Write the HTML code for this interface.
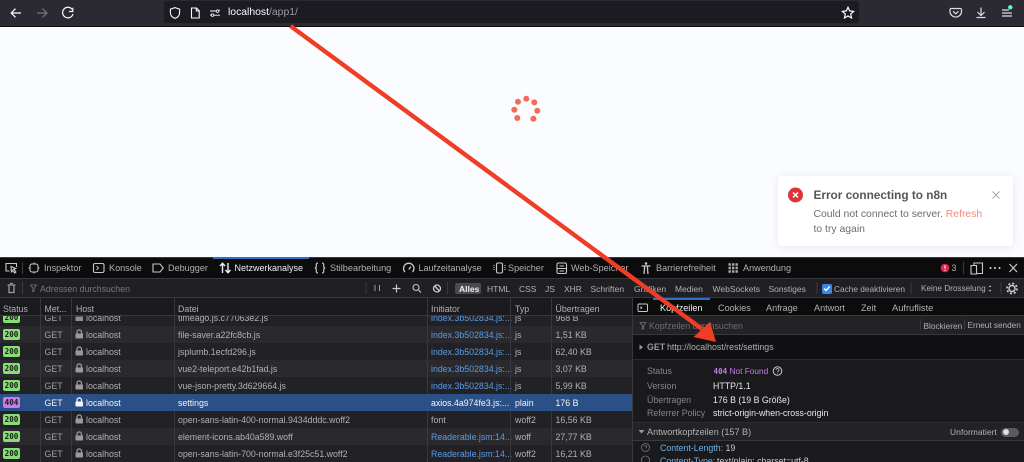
<!DOCTYPE html>
<html><head><meta charset="utf-8">
<style>
*{box-sizing:border-box}
html,body{margin:0;padding:0;width:1024px;height:462px;overflow:hidden;background:#fff}
body{font-family:"Liberation Sans",sans-serif;position:relative}
#w{position:absolute;left:0;top:0;width:1024px;height:462px;overflow:hidden;filter:blur(.35px)}
.a{position:absolute;white-space:nowrap}
.t{position:absolute;white-space:nowrap;font-size:8.8px;line-height:12px;color:#b1b1b3}
.tb{font-size:9.1px}
.fb{font-size:8.5px}
.r{position:absolute;left:0;width:632px;height:17px}
.r .t{top:2.5px}
.r .g{color:#a0a0a4}
.b{position:absolute;left:3px;top:3px;width:17px;height:11px;border-radius:2px;background:#86de74;color:#1a1a1c;font:bold 7.6px/11px "DejaVu Sans Mono","Liberation Mono",monospace;text-align:center}
.l{color:#5b9be6}
.s{position:absolute;top:298px;width:1px;height:164px;background:#38383d}
svg{position:absolute;overflow:visible}
</style></head><body><div id="w">
<!-- browser toolbar -->
<div class="a" style="left:0;top:0;width:1024px;height:27px;background:#2b2a33;border-bottom:1px solid #0c0c0d"></div>
<div class="a" style="left:164px;top:1px;width:695px;height:22px;background:#1c1b22;border-radius:3px"></div>
<svg style="left:0;top:0" width="1024" height="27" fill="none" stroke="#fbfbfe" stroke-width="1.2">
<path d="M21 13H11.500M15.500 8.700L11.200 13l4.300 4.300"/>
<path d="M37 13H47M42.500 8.700L47 13l-4.500 4.300" stroke="#77767c"/>
<path d="M72 9.200A5.300 5.300 0 1 0 73 14M72.800 7.800v3.700h-3.700"/>
<path d="M175 7.600l4.600 1.500v3.400c0 3-2 5-4.600 5.800-2.600-.8-4.600-2.800-4.600-5.800V9.100z" stroke-width="1.100"/>
<path d="M191.500 8h5l2.700 2.700v7.300h-7.700zM196.300 8v3h3" stroke-width="1.100"/>
<path d="M210 11h6M219 10.200h1M210 15h1M214 15.200h6M217.500 9.800a1.300 1.300 0 1 0 .01 0M212.500 13.800a1.300 1.300 0 1 0 .01 0" stroke-width=".9"/>
<path d="M848 7.300l1.700 3.600 3.900.5-2.900 2.700.8 3.900-3.500-2-3.500 2 .8-3.900-2.900-2.700 3.900-.5z"/>
<path d="M951 8.500h9.500a1.200 1.200 0 0 1 1 1v2.500a5.800 5.800 0 0 1-11.500 0V9.500a1.200 1.200 0 0 1 1-1zM953 11.300l2.700 2.500 2.700-2.500" stroke="#dcdce0"/>
<path d="M981 7.500v7.500M977.500 12l3.500 3.500 3.500-3.500M976.500 17.500h9" stroke="#dcdce0"/>
<path d="M1002 10h7M1002 13h10M1002 16h10" stroke="#dcdce0"/>
<circle cx="1010.300" cy="7.300" r="2.200" fill="#54ffbd" stroke="none"/>
</svg>
<div class="a" style="left:228px;top:6px;font-size:10.400px;line-height:13px;color:#fbfbfe">localhost<span style="color:#9a9aa0">/app1/</span></div>
<!-- page -->
<div class="a" style="left:0;top:27px;width:1024px;height:230px;background:#fbfcff"></div>
<svg style="left:0;top:0" width="1024" height="257" fill="#f26c57">
<circle cx="526.300" cy="98.700" r="3"/><circle cx="534.300" cy="102.400" r="3"/><circle cx="537.300" cy="110.700" r="3"/><circle cx="533.400" cy="118.700" r="3"/><circle cx="517.300" cy="118" r="3"/><circle cx="514.300" cy="109.700" r="3"/><circle cx="518" cy="101.700" r="3"/>
</svg>
<!-- toast -->
<div class="a" style="left:778px;top:176px;width:235px;height:70px;background:#fff;border-radius:3px;box-shadow:0 1px 8px rgba(90,100,130,.14)"></div>
<svg style="left:0;top:0" width="1024" height="257" fill="none">
<circle cx="795.500" cy="195" r="7.500" fill="#dd3535"/>
<path d="M793 192.500l5 5M798 192.500l-5 5" stroke="#fff" stroke-width="1.500"/>
<path d="M992.500 191.500l7 7M999.500 191.500l-7 7" stroke="#a8a8ab" stroke-width="1"/>
</svg>
<div class="a" style="left:813.500px;top:187px;font-size:11.800px;line-height:16px;font-weight:bold;color:#55555b">Error connecting to n8n</div>
<div class="a" style="left:813.500px;top:207px;font-size:10.400px;line-height:15px;color:#6c6c72">Could not connect to server. <span style="color:#f2897a">Refresh</span></div>
<div class="a" style="left:813.500px;top:222px;font-size:10.400px;line-height:15px;color:#6c6c72">to try again</div>
<!-- devtools -->
<div class="a" style="left:0;top:257px;width:1024px;height:205px;background:#202024"></div>
<div class="a" style="left:0;top:257px;width:1024px;height:22px;background:#0c0c0d;border-top:1px solid #3a3a40;border-bottom:1px solid #38383d"></div>
<div class="a" style="left:213px;top:257px;width:96px;height:2px;background:#2f6fc4"></div>
<div class="t tb" style="left:44px;top:262px">Inspektor</div>
<div class="t tb" style="left:109px;top:262px">Konsole</div>
<div class="t tb" style="left:168px;top:262px">Debugger</div>
<div class="t" style="left:234.500px;top:262px;color:#f0f0f4;font-size:9px">Netzwerkanalyse</div>
<div class="t" style="left:330px;top:262px;font-size:9.200px">Stilbearbeitung</div>
<div class="t tb" style="left:418.500px;top:262px">Laufzeitanalyse</div>
<div class="t tb" style="left:508px;top:262px">Speicher</div>
<div class="t tb" style="left:571px;top:262px">Web-Speicher</div>
<div class="t tb" style="left:656px;top:262px">Barrierefreiheit</div>
<div class="t tb" style="left:743px;top:262px">Anwendung</div>
<div class="t" style="left:951.500px;top:262px">3</div>
<svg style="left:0;top:0" width="1024" height="300" fill="none" stroke="#c8c8ca" stroke-width="1.100">
<path d="M9.500 271H6v-7.500h10.500V267M11 266.500l4.700 2.100-2 .7 2.200 2.800-1.200 1-2.100-2.800-1.200 1.500z" fill="#0c0c0d"/>
<path d="M22.500 262v12" stroke="#38383d"/>
<rect x="30" y="264" width="8" height="8" rx="2"/><path d="M34 262.500v1.500M34 272v1.500M28.500 268H30M38 268h1.500"/>
<rect x="93.500" y="263.500" width="10.500" height="9" rx="1.500"/><path d="M96.500 266l2 2-2 2" stroke-width=".9"/>
<path d="M153 264h7l3.300 4-3.300 4h-7z"/>
<path d="M222.500 273v-9.500M220 266l2.500-2.700 2.500 2.700M228 263v9.500M225.500 270l2.500 2.700 2.500-2.700" stroke="#f0f0f4" stroke-width="1.400"/>
<path d="M318 263c-2.500 0-1.500 2.800-1.800 4-.2.800-1.200 1-1.200 1s1 .2 1.200 1c.3 1.200-.7 4 1.800 4M322 263c2.500 0 1.500 2.800 1.800 4 .2.800 1.200 1 1.200 1s-1 .2-1.200 1c-.3 1.200.7 4-1.800 4" stroke-width="1.200"/>
<path d="M405 272a5.200 5.200 0 1 1 7.500 0M408.800 269.500l2-3" stroke-width="1.300"/>
<rect x="496.500" y="263" width="6" height="10" rx="1.500"/><path d="M494 265v6M505 265v6" stroke-dasharray="1 1"/>
<rect x="557" y="263" width="9.500" height="10.500" rx="1.500"/><path d="M559.500 266h4.500M557 268.500h9.500M559.500 271h4.500"/>
<circle cx="646" cy="263.500" r="1.300" fill="#c8c8ca" stroke="none"/><path d="M641.500 266h9M644.500 266v3l-.5 5M647.500 266v3l.5 5" stroke-width="1.300"/>
<path d="M728.500 264.500h2.400M732 264.500h2.400M735.500 264.500h2.400M728.500 268h2.400M732 268h2.400M735.500 268h2.400M728.500 271.500h2.400M732 271.500h2.400M735.500 271.500h2.400" stroke="#a8a8ac" stroke-width="2.400"/>
<circle cx="945" cy="268" r="4.300" fill="#e22850" stroke="none"/><path d="M945 265.500v3M945 269.700v1" stroke="#fff" stroke-width="1.200"/>
<path d="M963.500 262v12" stroke="#38383d"/>
<path d="M974 265.500v-2.500h8.500v10.500H977M971 265.500h5.500v8.500H971z"/>
<circle cx="990.500" cy="268" r="1" fill="#dcdce0" stroke="none"/><circle cx="995" cy="268" r="1" fill="#dcdce0" stroke="none"/><circle cx="999.500" cy="268" r="1" fill="#dcdce0" stroke="none"/>
<path d="M1009.500 264l7.500 8M1017 264l-7.500 8" stroke-width="1.200"/>
<!-- second toolbar -->
<path d="M7.500 285h8M9 285v7.500h5V285M10 283.500h3" stroke="#9a9a9e" stroke-width="1.300"/>
<path d="M22.500 282v12M366 282v12M447.500 282v12M817 282v12M911 282v12M1001 282v12" stroke="#38383d"/>
<path d="M30.500 285h6l-2.300 3v3l-1.400.8V288z" stroke="#77777b" stroke-width=".8"/>
<path d="M375 285v6M379.500 285v6" stroke="#9a9a9e" stroke-width="1"/>
<path d="M392.500 288.500h8M396.500 284.500v8" stroke-width="1.200"/>
<circle cx="416" cy="287.500" r="3"/><path d="M418.500 290l2.500 2.500"/>
<circle cx="437" cy="288.500" r="3.500" stroke-width="1.300"/><path d="M434.500 286l5 5" stroke-width="1.300"/>
<circle cx="1012" cy="288.500" r="3" stroke-width="1.500"/><circle cx="1012" cy="288.500" r="5" stroke-dasharray="2 1.930" stroke-width="1.800"/>
</svg>
<div class="a" style="left:0;top:279px;width:1024px;height:19px;border-bottom:1px solid #38383d"></div>
<div class="t" style="left:40px;top:283px;color:#77777c">Adressen durchsuchen</div>
<div class="a" style="left:455px;top:283px;width:26px;height:11px;background:#4a4a4f;border-radius:2px"></div>
<div class="t" style="left:459px;top:283px;color:#f0f0f4;font-weight:bold;font-size:8.500px">Alles</div>
<div class="t fb" style="left:487px;top:283px">HTML</div>
<div class="t fb" style="left:519px;top:283px">CSS</div>
<div class="t fb" style="left:545px;top:283px">JS</div>
<div class="t fb" style="left:564px;top:283px">XHR</div>
<div class="t fb" style="left:590.500px;top:283px">Schriften</div>
<div class="t fb" style="left:634px;top:283px">Grafiken</div>
<div class="t fb" style="left:675px;top:283px">Medien</div>
<div class="t fb" style="left:712.500px;top:283px">WebSockets</div>
<div class="t fb" style="left:768.500px;top:283px">Sonstiges</div>
<div class="a" style="left:822px;top:283.500px;width:10px;height:10px;background:#3a87e8;border-radius:2px"></div>
<svg style="left:0;top:0" width="1024" height="300" fill="none"><path d="M824 288.500l2 2 3.700-4" stroke="#fff" stroke-width="1.400"/><path d="M988.500 287l1.500-1.800 1.500 1.800zM988.500 290l1.500 1.800 1.500-1.800z" fill="#b1b1b3"/></svg>
<div class="t" style="left:834px;top:283px;font-size:8.300px">Cache deaktivieren</div>
<div class="t" style="left:921px;top:283px;font-size:8.200px">Keine Drosselung</div>
<!-- table header -->
<div class="a" style="left:0;top:298px;width:632px;height:18px;background:#1b1b1f;border-bottom:1px solid #38383d"></div>
<div class="t" style="left:3px;top:303px">Status</div>
<div class="t" style="left:44.500px;top:303px">Met...</div>
<div class="t" style="left:76px;top:303px">Host</div>
<div class="t" style="left:178px;top:303px">Datei</div>
<div class="t" style="left:431px;top:303px">Initiator</div>
<div class="t" style="left:515px;top:303px">Typ</div>
<div class="t" style="left:555.500px;top:303px">Übertragen</div>
<!-- rows -->
<div class="a" style="left:0;top:316px;width:632px;height:146px;overflow:hidden;background:#232327">
<div class="r" style="top:-7px;background:#222226"><div class="b">200</div><div class="t g" style="left:44.500px">GET</div><div class="t" style="left:86px">localhost</div><div class="t" style="left:178px">timeago.js.c77063e2.js</div><div class="t l" style="left:431px">index.3b502834.js:...</div><div class="t" style="left:515px">js</div><div class="t" style="left:555.500px">968 B</div></div>
<div class="r" style="top:10px;background:#2a2a2e"><div class="b">200</div><div class="t g" style="left:44.500px">GET</div><div class="t" style="left:86px">localhost</div><div class="t" style="left:178px">file-saver.a22fc8cb.js</div><div class="t l" style="left:431px">index.3b502834.js:...</div><div class="t" style="left:515px">js</div><div class="t" style="left:555.500px">1,51 KB</div></div>
<div class="r" style="top:27px;background:#222226"><div class="b">200</div><div class="t g" style="left:44.500px">GET</div><div class="t" style="left:86px">localhost</div><div class="t" style="left:178px">jsplumb.1ecfd296.js</div><div class="t l" style="left:431px">index.3b502834.js:...</div><div class="t" style="left:515px">js</div><div class="t" style="left:555.500px">62,40 KB</div></div>
<div class="r" style="top:44px;background:#2a2a2e"><div class="b">200</div><div class="t g" style="left:44.500px">GET</div><div class="t" style="left:86px">localhost</div><div class="t" style="left:178px">vue2-teleport.e42b1fad.js</div><div class="t l" style="left:431px">index.3b502834.js:...</div><div class="t" style="left:515px">js</div><div class="t" style="left:555.500px">3,07 KB</div></div>
<div class="r" style="top:61px;background:#222226"><div class="b">200</div><div class="t g" style="left:44.500px">GET</div><div class="t" style="left:86px">localhost</div><div class="t" style="left:178px">vue-json-pretty.3d629664.js</div><div class="t l" style="left:431px">index.3b502834.js:...</div><div class="t" style="left:515px">js</div><div class="t" style="left:555.500px">5,99 KB</div></div>
<div class="r" style="top:78px;background:#2b5088;z-index:2"><div class="b" style="background:#c77be6">404</div><div class="t" style="left:44.500px;color:#f4f4f6">GET</div><div class="t" style="left:86px;color:#f4f4f6">localhost</div><div class="t" style="left:178px;color:#f4f4f6">settings</div><div class="t" style="left:431px;color:#f4f4f6">axios.4a974fe3.js:...</div><div class="t" style="left:515px;color:#f4f4f6">plain</div><div class="t" style="left:555.500px;color:#f4f4f6">176 B</div></div>
<div class="r" style="top:95px;background:#222226"><div class="b">200</div><div class="t g" style="left:44.500px">GET</div><div class="t" style="left:86px">localhost</div><div class="t" style="left:178px">open-sans-latin-400-normal.9434dddc.woff2</div><div class="t" style="left:431px">font</div><div class="t" style="left:515px">woff2</div><div class="t" style="left:555.500px">16,56 KB</div></div>
<div class="r" style="top:112px;background:#2a2a2e"><div class="b">200</div><div class="t g" style="left:44.500px">GET</div><div class="t" style="left:86px">localhost</div><div class="t" style="left:178px">element-icons.ab40a589.woff</div><div class="t l" style="left:431px">Readerable.jsm:14...</div><div class="t" style="left:515px">woff</div><div class="t" style="left:555.500px">27,77 KB</div></div>
<div class="r" style="top:129px;background:#222226"><div class="b">200</div><div class="t g" style="left:44.500px">GET</div><div class="t" style="left:86px">localhost</div><div class="t" style="left:178px">open-sans-latin-700-normal.e3f25c51.woff2</div><div class="t l" style="left:431px">Readerable.jsm:14...</div><div class="t" style="left:515px">woff2</div><div class="t" style="left:555.500px">16,21 KB</div></div>
</div>
<div class="s" style="left:40px"></div><div class="s" style="left:71px"></div><div class="s" style="left:174px"></div><div class="s" style="left:427px"></div><div class="s" style="left:510px"></div><div class="s" style="left:551px"></div>
<!-- locks -->
<svg style="left:0;top:0;z-index:3" width="1024" height="462">
<path d="M75.500 316.500h7.500v4.500h-7.500z" fill="#8e8e92"/>
<g fill="#9a9a9e" stroke="none">
<g id="k"><rect x="75.500" y="333.500" width="7.500" height="5" rx=".7"/><path d="M77 334v-1.800a2.250 2.250 0 0 1 4.500 0v1.800" fill="none" stroke="#9a9a9e" stroke-width="1.300"/></g>
<use href="#k" y="17"/><use href="#k" y="34"/><use href="#k" y="51"/><use href="#k" y="85"/><use href="#k" y="102"/><use href="#k" y="119"/>
</g>
<rect x="75.500" y="401.500" width="7.500" height="5" rx=".7" fill="#f4f4f6"/><path d="M77 402v-1.800a2.250 2.250 0 0 1 4.500 0v1.800" fill="none" stroke="#f4f4f6" stroke-width="1.300"/>
</svg>
<!-- right panel -->
<div class="a" style="left:632px;top:298px;width:392px;height:164px;background:#1a1a1d;border-left:1px solid #38383d;z-index:4"></div>
<div class="a" style="left:633px;top:298px;width:391px;height:18px;background:#0c0c0d;border-bottom:1px solid #38383d;z-index:4"></div>
<div class="a" style="left:653px;top:298px;width:57px;height:2px;background:#2f6fc4;z-index:4"></div>
<div class="a" style="left:633px;top:316px;width:391px;height:19px;background:#232327;border-bottom:1px solid #38383d;z-index:4"></div>
<div class="a" style="left:633px;top:335px;width:391px;height:24px;background:#111114;z-index:4"></div>
<div id="p" style="position:absolute;left:0;top:0;width:1024px;height:462px;z-index:5">
<div class="t" style="left:660px;top:302px;color:#f0f0f4;font-size:9.100px">Kopfzeilen</div>
<div class="t tb" style="left:718px;top:302px">Cookies</div>
<div class="t tb" style="left:766px;top:302px">Anfrage</div>
<div class="t tb" style="left:814px;top:302px">Antwort</div>
<div class="t tb" style="left:861px;top:302px">Zeit</div>
<div class="t" style="left:892px;top:302px;font-size:9.300px">Aufrufliste</div>
<div class="t" style="left:649px;top:320px;color:#6d6d72">Kopfzeilen durchsuchen</div>
<div class="t" style="left:923.500px;top:320px;font-size:8.300px">Blockieren</div>
<div class="t" style="left:967.500px;top:320px;font-size:8.200px">Erneut senden</div>
<div class="a" style="left:633px;top:359px;width:391px;height:1px;background:#2c2c30"></div>
<div class="t" style="left:647px;top:341px;font-weight:bold;color:#9a9a9e">GET</div>
<div class="t" style="left:667px;top:341px">http://localhost/rest/settings</div>
<div class="t" style="left:647px;top:365px;color:#85858a">Status</div>
<div class="t" style="left:713.500px;top:365px;color:#c77be6;font-size:8.300px"><b style="font:bold 7.600px/12px 'DejaVu Sans Mono','Liberation Mono',monospace">404</b> Not Found</div>
<div class="t" style="left:647px;top:380px;color:#85858a">Version</div>
<div class="t" style="left:713px;top:380px;color:#e8e8ea">HTTP/1.1</div>
<div class="t" style="left:647px;top:393.500px;color:#85858a">Übertragen</div>
<div class="t" style="left:713px;top:393.500px;color:#e8e8ea">176 B (19 B Größe)</div>
<div class="t" style="left:647px;top:406.500px;color:#85858a">Referrer Policy</div>
<div class="t" style="left:713px;top:406.500px;color:#e8e8ea">strict-origin-when-cross-origin</div>
<div class="a" style="left:633px;top:422px;width:391px;height:19px;background:#232327;border-top:1px solid #2c2c30;border-bottom:1px solid #38383d"></div>
<div class="t" style="left:647px;top:426px;font-size:9.100px">Antwortkopfzeilen (157 B)</div>
<div class="t" style="left:950px;top:426px;font-size:8.500px">Unformatiert</div>
<div class="a" style="left:1000.500px;top:427.500px;width:18.500px;height:9px;background:#5a5a60;border-radius:5px"></div>
<div class="a" style="left:1002.500px;top:429px;width:6px;height:6px;background:#e0e0e2;border-radius:3px"></div>
<div class="t" style="left:660px;top:442px;color:#6aaee8">Content-Length:</div>
<div class="t" style="left:725.500px;top:442px;color:#c8c8ca">19</div>
<div class="t" style="left:660px;top:455px;color:#6aaee8">Content-Type:</div>
<div class="t" style="left:717px;top:455px;color:#c8c8ca">text/plain; charset=utf-8</div>
<svg style="left:0;top:0" width="1024" height="462" fill="none" stroke="#9a9a9e">
<rect x="638" y="304" width="9.500" height="7.500" rx="1" stroke="#c8c8ca"/><path d="M640.500 306v3.500l2-1.750z" fill="#c8c8ca" stroke="none"/>
<path d="M640 322.500h6l-2.300 3v3l-1.400.8v-3.800z" stroke="#77777b" stroke-width=".8"/>
<path d="M920.500 319v11M964.500 319v11" stroke="#38383d"/>
<path d="M639.500 344.500l3.500 2.700-3.500 2.700z" fill="#9a9a9e" stroke="none"/>
<path d="M638.500 430h6l-3 3.500z" fill="#9a9a9e" stroke="none"/>
<circle cx="777.500" cy="371" r="4.300" stroke="#c8c8ca"/><path d="M776 370a1.500 1.500 0 1 1 2 1.400c-.5.200-.5.500-.5.900M777.500 373.300v.6" stroke="#c8c8ca" stroke-width=".8"/>
<circle cx="645.500" cy="447.500" r="4" stroke="#77777b" stroke-width=".8"/><path d="M644.200 446.500a1.300 1.300 0 1 1 1.800 1.200c-.4.200-.5.400-.5.800" stroke="#77777b" stroke-width=".7"/>
<circle cx="645.500" cy="460" r="4" stroke="#77777b" stroke-width=".8"/>
</svg>
</div>
<!-- red arrow -->
<svg style="left:0;top:0;z-index:6" width="1024" height="462">
<path d="M290.500 26L702 329" stroke="#ef3d26" stroke-width="4.400" fill="none"/>
<path d="M716 342L693.500 337 710 322z" fill="#ef3d26"/>
</svg>
</div></body></html>
